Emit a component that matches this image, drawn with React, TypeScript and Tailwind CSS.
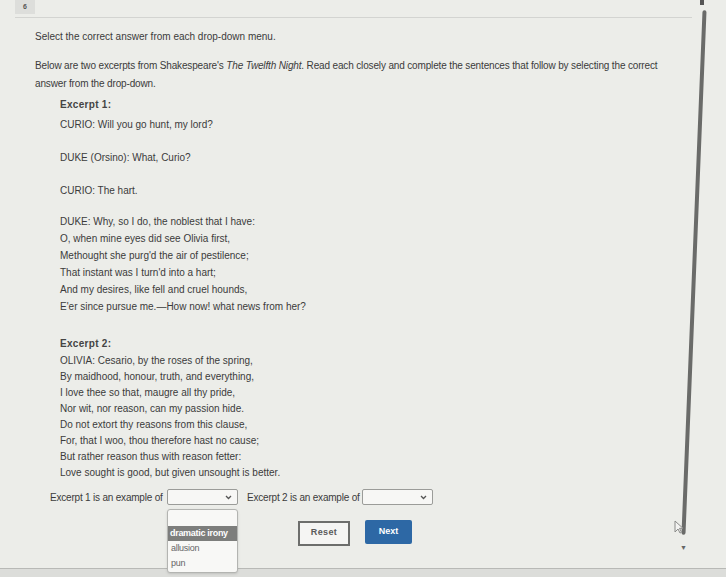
import React from "react";

const excerptOne = [
  ["CURIO: Will you go hunt, my lord?"],
  ["DUKE (Orsino): What, Curio?"],
  ["CURIO: The hart."],
  [
    "DUKE: Why, so I do, the noblest that I have:",
    "O, when mine eyes did see Olivia first,",
    "Methought she purg'd the air of pestilence;",
    "That instant was I turn'd into a hart;",
    "And my desires, like fell and cruel hounds,",
    "E'er since pursue me.—How now! what news from her?",
  ],
];

const excerptTwo = [
  "OLIVIA: Cesario, by the roses of the spring,",
  "By maidhood, honour, truth, and everything,",
  "I love thee so that, maugre all thy pride,",
  "Nor wit, nor reason, can my passion hide.",
  "Do not extort thy reasons from this clause,",
  "For, that I woo, thou therefore hast no cause;",
  "But rather reason thus with reason fetter:",
  "Love sought is good, but given unsought is better.",
];

const options = ["", "dramatic irony", "allusion", "pun"];

function Chevron() {
  return (
    <svg width="7" height="5" viewBox="0 0 7 5" className="shrink-0">
      <path d="M1 1l2.5 2.5L6 1" fill="none" stroke="#555" strokeWidth="1.3" />
    </svg>
  );
}

function Select() {
  return (
    <div className="flex h-[16px] w-[71px] items-center justify-end rounded-[2px] border border-[#9b9c99] bg-[#f7f7f5] pr-[5px]">
      <Chevron />
    </div>
  );
}

export default function App() {
  return (
    <div
      className="relative flex h-[577px] w-[726px] flex-col overflow-hidden bg-[#ecede9] text-[#3b3b3b]"
      style={{ fontFamily: '"Liberation Sans", Arial, sans-serif' }}
    >
      <div className="flex-1">
        {/* question tab */}
        <div className="ml-[15px] flex h-[14px] w-[20px] items-center justify-center bg-[#dddedb] text-[7px] font-bold text-[#555]">
          6
        </div>
        <div className="ml-[15px] mr-[34px] mt-[3px] h-px bg-[#d3d4d1]" />

        <div className="pl-[35px] pr-[60px]">
          <p className="mt-[11px] text-[10px] leading-[16px]">
            Select the correct answer from each drop-down menu.
          </p>
          <p className="mt-[12px] text-[10px] leading-[18px] tracking-[-0.15px]">
            Below are two excerpts from Shakespeare's <i>The Twelfth Night</i>. Read each closely and
            complete the sentences that follow by selecting the correct answer from the drop-down.
          </p>
        </div>

        {/* excerpt 1 */}
        <div className="mt-[2.5px] pl-[60px] text-[10px]">
          <div className="font-bold leading-[17px] tracking-[0.3px] text-[#444]">Excerpt 1:</div>
          {excerptOne.map((para, i) => (
            <div
              key={i}
              className={
                i === 0 ? "mt-[3px]" : i === 3 ? "mt-[14px]" : "mt-[16px]"
              }
            >
              {para.map((line) => (
                <div key={line} className="leading-[17px]">
                  {line}
                </div>
              ))}
            </div>
          ))}

          {/* excerpt 2 */}
          <div className="mt-[20px] font-bold leading-[17px] tracking-[0.3px] text-[#444]">
            Excerpt 2:
          </div>
          <div className="mt-[1.5px]">
            {excerptTwo.map((line) => (
              <div key={line} className="leading-[16px]">
                {line}
              </div>
            ))}
          </div>
        </div>

        {/* answer row */}
        <div className="relative mt-[7.5px] flex items-center pl-[50px] text-[10px] leading-[17px] tracking-[-0.2px]">
          <span className="w-[117px]">Excerpt 1 is an example of</span>
          <div className="relative">
            <Select />
            <div className="absolute left-0 top-[20px] w-[71px] overflow-hidden rounded-[3px] border border-[#b3b4b1] bg-[#f8f8f6] py-[1px] text-[9px] tracking-[-0.3px] shadow-sm">
              {options.map((o) => (
                <div
                  key={o || "blank"}
                  className={
                    o === "dramatic irony"
                      ? "h-[15px] bg-[#7d7e7c] px-[2px] font-bold leading-[15px] text-white"
                      : "h-[15px] px-[3px] leading-[15px] text-[#666]"
                  }
                >
                  {o}
                </div>
              ))}
            </div>
          </div>
          <span className="ml-[9px] w-[115px]">Excerpt 2 is an example of</span>
          <Select />
        </div>

        <div className="mt-[15px] flex items-start gap-[15px] pl-[298px]">
          <button className="h-[25px] w-[52px] border-2 border-[#6d6e6c] bg-[#f5f5f3] text-[9px] font-bold tracking-[0.4px] text-[#5a5a5a]">
            Reset
          </button>
          <button className="-mt-px h-[24px] w-[47px] rounded-[2px] bg-[#2d68a5] text-[9px] font-bold text-white">
            Next
          </button>
        </div>
      </div>

      {/* bottom edge */}
      <div className="h-[9px] border-t border-[#b8b9b6] bg-[#dcddda]" />

      {/* scrollbar */}
      <div className="absolute right-[22px] top-0 h-[5px] w-[4px] bg-[#555]" />
      <div className="absolute right-[30px] top-[10px] h-[525px] w-[4px] rotate-[2.3deg] rounded-full bg-[#6a6b69]" />
      <div className="absolute left-[680px] top-[544px] text-[7px] leading-none text-[#666]">▼</div>

      {/* mouse pointer */}
      <svg className="absolute left-[674px] top-[520px]" width="10" height="14" viewBox="0 0 10 14">
        <path d="M1 1v11l3-3 2 4 1.5-.7-2-4H9z" fill="#f3f3f1" stroke="#8a8b89" strokeWidth="1" />
      </svg>
    </div>
  );
}
